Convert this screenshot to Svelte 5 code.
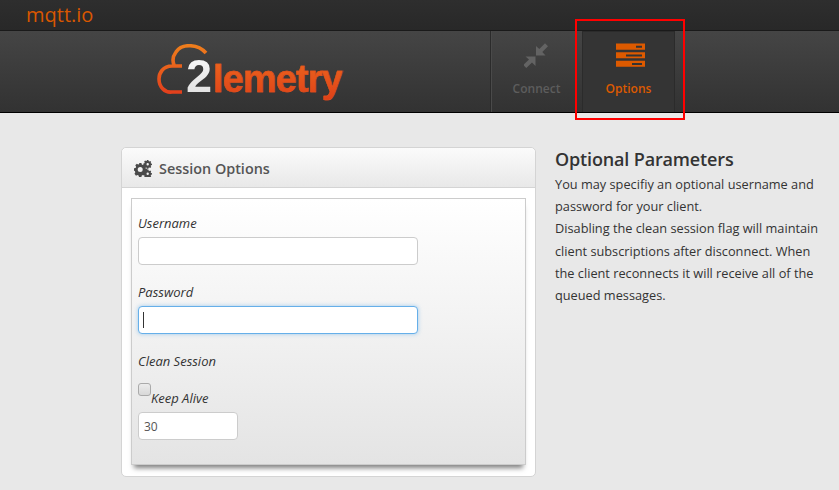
<script lang="ts">
  let username = "";
  let keepAlive = 30;
</script>

<div class="page">
  <div class="topbar"><a class="brand">mqtt.io</a></div>

  <header class="header">
    <div class="logo">
      <svg class="cloud" width="62" height="52" viewBox="156 44 62 52" aria-hidden="true">
        <defs>
          <linearGradient id="cloudGrad" x1="0" y1="0" x2="0" y2="1">
            <stop offset="0" stop-color="#ee7d1c" />
            <stop offset="1" stop-color="#e2401c" />
          </linearGradient>
        </defs>
        <path
          d="M206 53 C198 44 182 43 176 52 C173 56 172 60 174 65 M182 66 L172 66 C163 66 159 73 159 79 C159 87 165 93 172 92 L182 92"
          fill="none"
          stroke="url(#cloudGrad)"
          stroke-width="3.6"
        />
      </svg>
      <span class="two">2</span><span class="word">lemetry</span>
    </div>

    <nav class="nav">
      <div class="tab">
        <svg width="25" height="25" viewBox="524 44 25 25" aria-hidden="true">
          <path
            fill="#636363"
            d="M536 47 V56.5 H545.5 L542.3 53 L548 47.3 L545 44.3 L539.3 50 Z M535.5 57.5 V67 L532 63.5 L526.3 69 L523.3 66 L529 60.5 L525.5 57.5 Z"
          />
        </svg>
        <span>Connect</span>
      </div>
      <div class="tab active">
        <svg class="bars" width="30" height="24" viewBox="0 0 30 24" aria-hidden="true">
          <path fill="#dd5a00" d="M0 0h29v6.3H0zM0 8.8h29v6H0zM0 17.3h29v6H0z" />
          <path fill="#333" d="M20 2.3h6v2h-6zM10 11h16v2H10zM16 19.5h10v2H16z" />
        </svg>
        <span>Options</span>
      </div>
    </nav>
  </header>

  <main class="content">
    <section class="card">
      <div class="card-title">
        <svg width="18" height="17" viewBox="0 0 18 17" aria-hidden="true">
          <g fill="#4a4a4a">
            <path fill-rule="evenodd" d="M5 3h2.4l.4 1.600 1.200.5 1.400-.8 1.500 1.500-.8 1.400.5 1.200 1.600.4v2.400l-1.600.4-.5 1.200.8 1.400-1.500 1.500-1.400-.8-1.200.5-.4 1.500H5l-.4-1.500-1.200-.5-1.400.8L.5 13.700l.8-1.400-.5-1.200L0 10.700V8.300l1.600-.4.5-1.200-.8-1.400 1.500-1.500 1.400.8 1.200-.5zM6.200 7a2.500 2.500 0 1 0 0 5 2.500 2.500 0 0 0 0-5z" />
            <path fill-rule="evenodd" d="M14 0h1.400l.2 1 .8.4.9-.5.9 1-.5.8.3.8 1 .2v1.400l-1 .2-.3.8.5.9-1 .9-.8-.5-.8.3-.2 1H14l-.2-1-.8-.3-.8.5-1-.9.5-.9-.3-.8-1-.2V3.400l1-.2.3-.8-.5-.8.9-1 .9.5.8-.4zM14.700 3a1.200 1.200 0 1 0 0 2.400 1.200 1.200 0 0 0 0-2.400z" transform="translate(-1 0)" />
            <path fill-rule="evenodd" d="M14 9.500h1.400l.2 1 .8.4.9-.5.9 1-.5.8.3.8 1 .2v1.400l-1 .2-.3.8.5.9-1 .9-.8-.5-.8.3-.2 1H14l-.2-1-.8-.3-.8.5-1-.9.5-.9-.3-.8-1-.2v-1.400l1-.2.3-.8-.5-.8.9-1 .9.5.8-.4zM14.700 12.500a1.200 1.200 0 1 0 0 2.400 1.200 1.200 0 0 0 0-2.400z" transform="translate(-1 0)" />
          </g>
        </svg>
        <h3>Session Options</h3>
      </div>
      <div class="card-body">
        <form class="form">
          <label class="label" for="user">Username</label>
          <input id="user" class="field wide" type="text" bind:value={username} />

          <label class="label pw" for="pass">Password</label>
          <div class="field wide focus"><i class="caret"></i></div>

          <div class="label clean">Clean Session</div>
          <div class="check-row">
            <span class="check"></span>
            <label class="label" for="keep">Keep Alive</label>
          </div>
          <input id="keep" class="field short" type="text" bind:value={keepAlive} />
        </form>
      </div>
    </section>

    <aside class="help">
      <h2>Optional Parameters</h2>
      <p>
        You may specifiy an optional username and password for your client.<br />
        Disabling the clean session flag will maintain client subscriptions after disconnect. When the client reconnects it will receive all of the queued messages.
      </p>
    </aside>
  </main>

  <div class="highlight"></div>
</div>

<style>
  :global(body) {
    margin: 0;
    background: #e8e8e8;
    font-family: "Open Sans", sans-serif;
  }

  .page {
    position: relative;
    height: 490px;
    overflow: hidden;
    background: #e8e8e8;
  }

  .topbar {
    height: 30px;
    background: linear-gradient(#2e2e2e, #282828);
    border-bottom: 1px solid #1a1a1a;
    padding-left: 26px;
  }

  .brand {
    font-size: 20px;
    line-height: 30px;
    color: #d95700;
  }

  .header {
    display: flex;
    height: 81px;
    background: linear-gradient(#454545, #323232);
    border-bottom: 1px solid #000;
  }

  .logo {
    display: flex;
    position: relative;
    width: 490px;
    height: 81px;
    flex: none;
  }

  .cloud {
    position: absolute;
    left: 156px;
    top: 13px;
  }

  .two {
    position: absolute;
    left: 186px;
    top: 12px;
    font: bold 47px/66px "Liberation Sans", sans-serif;
    background: linear-gradient(#fff, #d9d9d9);
    background-clip: text;
    -webkit-background-clip: text;
    color: transparent;
  }

  .word {
    position: absolute;
    left: 213px;
    top: 24px;
    font: bold 38px/48px "Liberation Sans", sans-serif;
    letter-spacing: -0.9px;
    background: linear-gradient(#ee6a1e, #dd3d18);
    background-clip: text;
    -webkit-background-clip: text;
    color: transparent;
    -webkit-text-stroke: 0.5px #e4521b;
  }

  .nav {
    display: flex;
    height: 81px;
  }

  .tab {
    width: 91px;
    height: 81px;
    display: flex;
    flex-direction: column;
    align-items: center;
    border-left: 1px solid #2b2b2b;
    box-shadow: inset 1px 0 0 #4a4a4a;
    font-size: 12px;
    font-weight: 600;
    color: #5d5d5d;
  }

  .tab svg {
    margin-top: 12px;
    height: 25px;
  }

  .tab span {
    margin-top: 12px;
    line-height: 18px;
  }

  .tab .bars {
    margin-left: 5px;
  }

  .active {
    background: #343434;
    color: #dd5a00;
    border-right: 1px solid #2b2b2b;
    box-shadow: inset 0 1px 0 #2b2b2b;
  }

  .content {
    display: flex;
    align-items: flex-start;
    gap: 19px;
    padding: 34px 0 0 121px;
  }

  .card {
    width: 413px;
    height: 328px;
    flex: none;
    background: #fff;
    border: 1px solid #d4d4d4;
    border-radius: 5px;
  }

  .card-title {
    display: flex;
    align-items: center;
    gap: 7px;
    height: 38px;
    padding: 1px 0 0 12px;
    background: linear-gradient(#fbfbfb, #e8e8e8);
    border-bottom: 1px solid #d4d4d4;
    border-radius: 5px 5px 0 0;
  }

  .card-title h3 {
    margin: 0;
    font-size: 14.4px;
    font-weight: 600;
    color: #555;
  }

  .card-body {
    margin: 10px 9px;
    height: 267px;
    box-sizing: border-box;
    border: 1px solid #ccc;
    background: linear-gradient(#fff, #e4e4e4);
    box-shadow: 0 6px 5px -3px rgba(0, 0, 0, 0.5);
  }

  .form {
    display: flex;
    flex-direction: column;
    align-items: flex-start;
    padding: 15px 6px 0;
  }

  .label {
    font-size: 13px;
    font-style: italic;
    line-height: 18px;
    color: #333;
  }

  .field {
    box-sizing: border-box;
    margin: 5px 0 0;
    padding: 0 5px;
    height: 28px;
    border: 1px solid #ccc;
    border-radius: 4px;
    background: #fff;
    font: 12px "Open Sans", sans-serif;
    color: #555;
    outline: none;
  }

  .wide {
    width: 280px;
  }

  .short {
    width: 100px;
  }

  .pw {
    margin-top: 18px;
  }

  .focus {
    display: flex;
    align-items: center;
    padding-left: 4px;
    border-color: #66afe9;
    box-shadow: 0 0 4px rgba(102, 175, 233, 0.6);
  }

  .caret {
    width: 1px;
    height: 16px;
    background: #333;
  }

  .clean {
    margin-top: 18px;
  }

  .check-row {
    display: flex;
    align-items: flex-end;
    margin-top: 12px;
    height: 25px;
  }

  .check {
    box-sizing: border-box;
    width: 13px;
    height: 13px;
    margin-bottom: 11px;
    border: 1px solid #aaa;
    border-radius: 3px;
    background: linear-gradient(#ececec, #d8d8d8);
  }

  .help {
    width: 275px;
    margin-top: -1px;
  }

  .help h2 {
    margin: 0;
    font-size: 18px;
    font-weight: 600;
    letter-spacing: -0.15px;
    line-height: 27px;
    color: #333;
  }

  .help p {
    margin: 0;
    font-size: 12.75px;
    line-height: 22.2px;
    color: #333;
  }

  .highlight {
    position: absolute;
    left: 575px;
    top: 19px;
    width: 106px;
    height: 97px;
    border: 2px solid #f00;
    pointer-events: none;
  }
</style>
